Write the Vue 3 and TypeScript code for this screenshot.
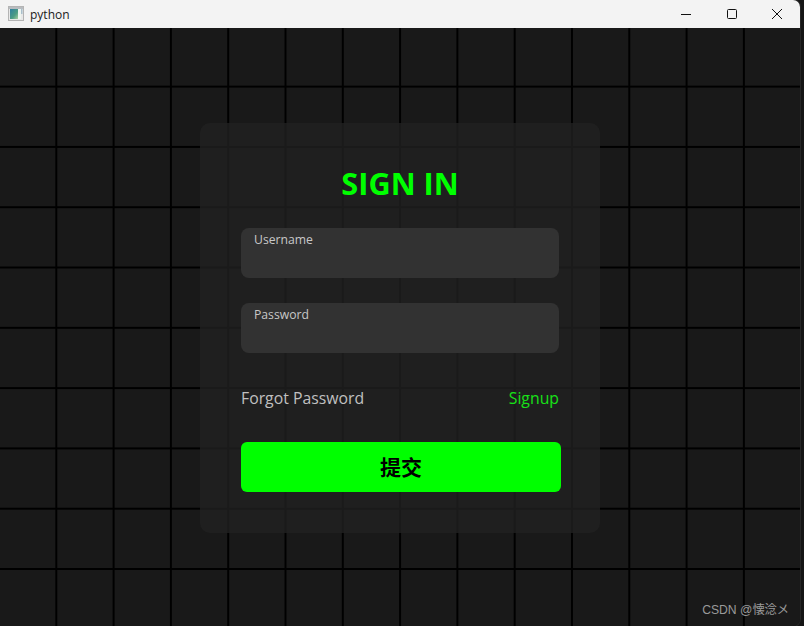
<script setup lang="ts">
const fields: string[] = ['Username', 'Password']
</script>

<template>
  <div class="window">
    <header class="titlebar">
      <svg class="app-icon" width="16" height="15" viewBox="0 0 16 15">
        <defs>
          <linearGradient id="g" x1="0" y1="0" x2="1" y2="1">
            <stop offset="0" stop-color="#2f7f9f" />
            <stop offset="0.6" stop-color="#4c9c84" />
            <stop offset="1" stop-color="#a8cf9f" />
          </linearGradient>
        </defs>
        <rect x="0.5" y="0.5" width="15" height="14" fill="#e8e8e8" stroke="#b4b4b4" />
        <rect x="1" y="1" width="14" height="2" fill="#b8bcc0" />
        <rect x="2" y="3" width="8" height="10" fill="url(#g)" />
        <rect x="10" y="3" width="3" height="10" fill="#eef5f0" />
        <rect x="13" y="3" width="1.5" height="5" fill="#a9bfcc" />
      </svg>
      <span class="app-name">python</span>
      <div class="controls">
        <button class="ctl">
          <svg width="12" height="12" viewBox="0 0 12 12"><path d="M1 6.5h10" stroke="#111" fill="none" /></svg>
        </button>
        <button class="ctl">
          <svg width="12" height="12" viewBox="0 0 12 12"><rect x="1.5" y="1.5" width="9" height="9" rx="1" stroke="#111" fill="none" /></svg>
        </button>
        <button class="ctl">
          <svg width="12" height="12" viewBox="0 0 12 12"><path d="M1 1l10 10M11 1L1 11" stroke="#111" fill="none" /></svg>
        </button>
      </div>
    </header>

    <main class="stage">
      <section class="card">
        <h1 class="title">SIGN IN</h1>
        <div class="fields">
          <label v-for="f in fields" :key="f" class="field">
            <span class="field-label">{{ f }}</span>
          </label>
        </div>
        <div class="links">
          <a class="forgot">Forgot Password</a>
          <a class="signup">Signup</a>
        </div>
        <button class="submit">提交</button>
      </section>
      <span class="watermark">CSDN @懐淰メ</span>
    </main>
  </div>
</template>

<style>
body {
  background: #151515;
}
</style>

<style scoped>
.window {
  width: 800px;
  height: 626px;
  display: flex;
  flex-direction: column;
  overflow: hidden;
  border-radius: 0 7px 7px 0;
  box-shadow: 0 0 0 1px #262626;
  font-family: "Open Sans", "Noto Sans", "Noto Sans CJK SC", sans-serif;
}
.titlebar {
  height: 28px;
  flex: none;
  display: flex;
  align-items: center;
  background: #f3f3f3;
  padding-left: 8px;
}
.app-icon {
  flex: none;
  margin-top: -2px;
}
.app-name {
  margin-left: 6px;
  font-size: 12px;
  color: #1a1a1a;
}
.controls {
  margin-left: auto;
  display: flex;
  align-items: center;
}
.ctl {
  width: 45.5px;
  height: 28px;
  padding: 0;
  border: 0;
  background: transparent;
  display: flex;
  align-items: center;
  justify-content: center;
}
.stage {
  flex: 1;
  position: relative;
  display: flex;
  align-items: center;
  justify-content: center;
  background-color: #191919;
  background-image:
    linear-gradient(to left, #000 2px, transparent 2px),
    linear-gradient(to top, #000 2px, transparent 2px);
  background-size: 57.3px 60.3px;
  background-position: 0 -0.7px;
}
.card {
  box-sizing: border-box;
  width: 400px;
  height: 410px;
  margin-top: 2px;
  padding: 39px 41px 0;
  border-radius: 10px;
  background: rgba(33, 33, 33, 0.78);
  display: flex;
  flex-direction: column;
}
.title {
  margin: 0;
  height: 42px;
  line-height: 42px;
  text-align: center;
  font-size: 30.7px;
  font-weight: 700;
  color: #00ff00;
}
.fields {
  margin-top: 24px;
  display: flex;
  flex-direction: column;
  gap: 25px;
}
.field {
  display: block;
  box-sizing: border-box;
  width: 318px;
  height: 50px;
  padding: 3px 13px;
  border-radius: 8px;
  background: #323232;
}
.field-label {
  font-size: 12.2px;
  line-height: 17px;
  display: block;
  color: #c8c8c8;
}
.links {
  width: 318px;
  margin-top: 34px;
  display: flex;
  justify-content: space-between;
  font-size: 15.8px;
  line-height: 23px;
}
.forgot {
  color: #c0c0c0;
}
.signup {
  color: #18e018;
}
.submit {
  margin-top: 32px;
  width: 320px;
  height: 50px;
  padding: 0 0 2px;
  border: 0;
  border-radius: 6px;
  background: #00ff00;
  color: #000;
  font-family: "Noto Sans CJK SC", sans-serif;
  font-size: 21px;
  font-weight: 700;
}
.watermark {
  position: absolute;
  right: 11px;
  bottom: 8px;
  font-family: "Liberation Sans", "Noto Sans CJK JP", sans-serif;
  font-size: 12.2px;
  color: #9a9a9a;
}
</style>
